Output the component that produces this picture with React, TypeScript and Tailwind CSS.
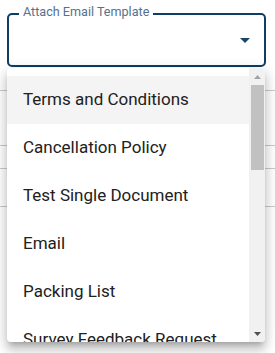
import React from 'react';

const templates = [
  'Terms and Conditions',
  'Cancellation Policy',
  'Test Single Document',
  'Email',
  'Packing List',
  'Survey Feedback Request',
];

export default function App() {
  return (
    <div
      className="relative w-[275px] h-[353px] overflow-hidden bg-white"
      style={{ fontFamily: 'Roboto, "Liberation Sans", sans-serif' }}
    >
      {/* select field */}
      <div className="pt-[13px] pl-[7px] pr-[9px]">
        <div className="relative h-[54px] rounded-[5px] border-2 border-[#0f3d63]">
          <span className="absolute left-[10px] top-[-10px] bg-white px-[4px] text-[12.6px] leading-[14px] text-[#56718c]">
            Attach Email Template
          </span>
          <svg
            className="absolute right-[14px] top-[23px] w-[10px] h-[5px]"
            viewBox="0 0 10 5"
            fill="#1b4469"
          >
            <path d="M0 0h10L5 5z" />
          </svg>
        </div>
      </div>

      {/* rows under the menu */}
      <div className="flex flex-col">
        <div className="h-[24px] border-b border-[#c9c9c9]" />
        <div className="h-[55px] border-b border-[#c9c9c9]" />
        <div className="h-[23px] border-b border-[#c9c9c9]" />
        <div className="h-[38px] border-b border-[#c9c9c9]" />
      </div>

      {/* dropdown menu */}
      <div className="absolute left-[7px] top-[68px] w-[258px] h-[274px] flex overflow-hidden rounded-[4px] bg-white shadow-[0_5px_5px_-3px_rgba(0,0,0,0.2),0_8px_10px_1px_rgba(0,0,0,0.14),0_3px_14px_2px_rgba(0,0,0,0.12)]">
        <ul className="flex-1 pt-2 overflow-hidden">
          {templates.map((t, i) => (
            <li
              key={t}
              className={`h-[48px] flex items-center pl-4 text-[17px] text-[#212121] whitespace-nowrap ${
                i === 0 ? 'bg-[#f4f4f4]' : ''
              }`}
            >
              {t}
            </li>
          ))}
        </ul>
        <div className="w-[16px] bg-[#f1f1f1] flex flex-col items-center">
          <div className="h-[17px] flex items-center justify-center">
            <svg className="w-[7px] h-[4px]" viewBox="0 0 7 4" fill="#a3a3a3">
              <path d="M3.5 0L7 4H0z" />
            </svg>
          </div>
          <div className="w-[13px] h-[85px] ml-[1px] bg-[#c1c1c1]" />
          <div className="flex-1" />
          <div className="h-[17px] flex items-center justify-center">
            <svg className="w-[7px] h-[4px]" viewBox="0 0 7 4" fill="#505050">
              <path d="M0 0h7L3.5 4z" />
            </svg>
          </div>
        </div>
      </div>
    </div>
  );
}
